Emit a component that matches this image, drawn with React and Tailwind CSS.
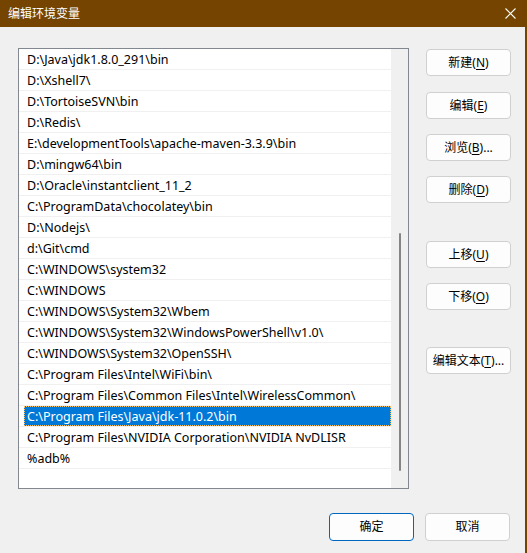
const paths = [
  "D:\\Java\\jdk1.8.0_291\\bin",
  "D:\\Xshell7\\",
  "D:\\TortoiseSVN\\bin",
  "D:\\Redis\\",
  "E:\\developmentTools\\apache-maven-3.3.9\\bin",
  "D:\\mingw64\\bin",
  "D:\\Oracle\\instantclient_11_2",
  "C:\\ProgramData\\chocolatey\\bin",
  "D:\\Nodejs\\",
  "d:\\Git\\cmd",
  "C:\\WINDOWS\\system32",
  "C:\\WINDOWS",
  "C:\\WINDOWS\\System32\\Wbem",
  "C:\\WINDOWS\\System32\\WindowsPowerShell\\v1.0\\",
  "C:\\WINDOWS\\System32\\OpenSSH\\",
  "C:\\Program Files\\Intel\\WiFi\\bin\\",
  "C:\\Program Files\\Common Files\\Intel\\WirelessCommon\\",
  "C:\\Program Files\\Java\\jdk-11.0.2\\bin",
  "C:\\Program Files\\NVIDIA Corporation\\NVIDIA NvDLISR",
  "%adb%",
];

const SELECTED = 17;

function Btn({ label, mnemonic, tail = "", primary = false, className = "" }) {
  return (
    <button
      className={
        "h-[27px] w-[85px] rounded-[4px] border bg-[#fdfdfd] text-[12px] text-black flex items-center justify-center " +
        (primary ? "border-[#0067c0] " : "border-[#d0d0d0] ") +
        className
      }
    >
      <span>
        {label}
        {mnemonic && (
          <>
            (<span className="underline underline-offset-2">{mnemonic}</span>)
          </>
        )}
        {tail}
      </span>
    </button>
  );
}

export default function App() {
  return (
    <div
      className="w-[527px] h-[553px] bg-[#f0f0f0] flex flex-col overflow-hidden"
      style={{ fontFamily: '"Noto Sans", "Noto Sans CJK SC", sans-serif' }}
    >
      {/* title bar */}
      <div className="h-[27px] shrink-0 bg-[#744400] flex items-center justify-between pl-[8px] pr-[11px] text-white text-[12px]">
        <span>编辑环境变量</span>
        <svg width="11" height="11" viewBox="0 0 11 11" stroke="white" strokeWidth="1.1">
          <path d="M0.5 0.5 L10.5 10.5 M10.5 0.5 L0.5 10.5" />
        </svg>
      </div>

      <div className="flex flex-1">
        <div className="w-[525px] flex flex-col pl-[18px] pt-[21px]">
          <div className="flex">
            {/* path list */}
            <div className="w-[391px] h-[441px] border border-[#828790] bg-white flex">
              <div className="w-[372px] flex flex-col">
                {paths.map((p, i) => (
                  <div key={p} className="h-[21px] border-b border-[#f0f0f0] flex">
                    <div
                      className={
                        "ml-[5px] flex-1 flex items-center pl-[3px] pt-[2px] text-[12.5px] leading-none whitespace-nowrap " +
                        (i === SELECTED
                          ? "bg-[#0078d7] text-white outline outline-1 outline-dotted outline-[#f5c16c] -outline-offset-1"
                          : "text-black")
                      }
                    >
                      {p}
                    </div>
                  </div>
                ))}
              </div>
              {/* collapsed scrollbar */}
              <div className="flex-1 bg-[#f0f0f0] flex justify-center">
                <div className="w-[2px] mt-[184px] h-[238px] bg-[#858585] rounded-full" />
              </div>
            </div>

            {/* action buttons */}
            <div className="ml-[17px] pt-[1px] flex flex-col">
              <Btn label="新建" mnemonic="N" />
              <Btn label="编辑" mnemonic="E" className="mt-[16px]" />
              <Btn label="浏览" mnemonic="B" tail="..." className="mt-[15px]" />
              <Btn label="删除" mnemonic="D" className="mt-[15px]" />
              <Btn label="上移" mnemonic="U" className="mt-[38px]" />
              <Btn label="下移" mnemonic="O" className="mt-[15px]" />
              <Btn label="编辑文本" mnemonic="T" tail="..." className="mt-[37px]" />
            </div>
          </div>

          {/* dialog buttons */}
          <div className="flex justify-end gap-[11px] mt-[24px] pr-[15px]">
            <Btn label="确定" primary className="h-[28px] w-[84px]" />
            <Btn label="取消" className="h-[28px] w-[84px]" />
          </div>
        </div>
        <div className="w-[2px] bg-[#744400]" />
      </div>
    </div>
  );
}
